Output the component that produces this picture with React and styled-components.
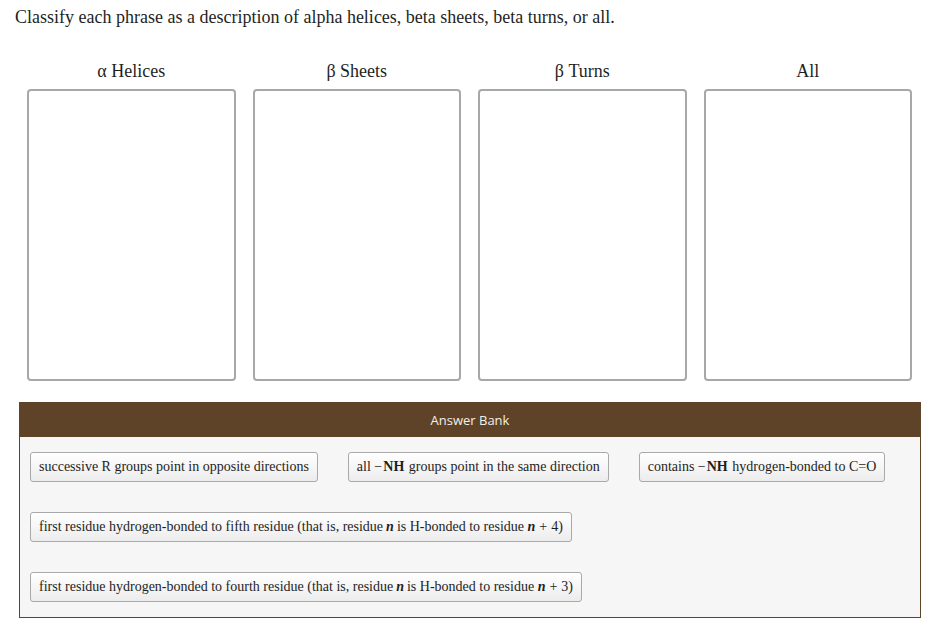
import React from "react";
import styled, { createGlobalStyle } from "styled-components";

const GlobalStyle = createGlobalStyle`
  html, body {
    margin: 0;
    padding: 0;
    background: #fff;
  }
  body {
    font-family: "Liberation Serif", "Times New Roman", serif;
    color: #222;
  }
`;

const columns = [
  { id: "alpha", label: "α Helices" },
  { id: "sheets", label: "β Sheets" },
  { id: "turns", label: "β Turns" },
  { id: "all", label: "All" },
];

const Page = styled.div`
  width: 936px;
  padding: 7px 0 0;
`;

const Prompt = styled.p`
  margin: 0 0 0 15px;
  font-size: 18px;
  line-height: 21px;
  color: #1f1f1f;
`;

const Targets = styled.div`
  display: grid;
  grid-template-columns: repeat(4, 1fr);
  column-gap: 17px;
  width: 885px;
  margin: 33px 0 0 27px;
`;

const Column = styled.div`
  display: flex;
  flex-direction: column;
  align-items: center;
`;

const ColumnTitle = styled.div`
  font-size: 18px;
  line-height: 20px;
  color: #1f1f1f;
  margin-bottom: 8px;
`;

const DropBox = styled.div`
  box-sizing: border-box;
  width: 100%;
  height: 292px;
  border: 2px solid #a8a8a8;
  border-radius: 4px;
  background: #fff;
`;

const Bank = styled.section`
  box-sizing: border-box;
  width: 902px;
  margin: 21px 0 0 19px;
  border: 1px solid #5e4329;
  background: #f6f6f6;
`;

const BankHeader = styled.div`
  height: 34px;
  background: #5e4329;
  color: #f4efe8;
  font-family: "Open Sans", "Noto Sans", sans-serif;
  font-size: 13px;
  display: flex;
  align-items: center;
  justify-content: center;
`;

const Chips = styled.div`
  display: flex;
  flex-wrap: wrap;
  column-gap: 30px;
  row-gap: 30px;
  padding: 15px 10px 15px;
`;

const Chip = styled.div`
  box-sizing: border-box;
  height: 30px;
  padding: 0 8px;
  display: flex;
  align-items: center;
  border: 1px solid #a9a9a9;
  border-radius: 3px;
  background: linear-gradient(#ffffff, #ececec);
  font-size: 14px;
  color: #1e1e1e;
  white-space: nowrap;
`;

const Chem = styled.b`
  font-weight: bold;
  margin: 0 1px;
`;

const Var = styled.i`
  font-weight: bold;
  margin: 0 ${(p) => (p.$tight ? "0" : "3px")};
`;

const Op = styled.span`
  margin: 0 ${(p) => (p.$tight ? "0" : "4px")};
`;

export default function App() {
  return (
    <Page>
      <GlobalStyle />
      <Prompt>
        Classify each phrase as a description of alpha helices, beta sheets,
        beta turns, or all.
      </Prompt>
      <Targets>
        {columns.map((c) => (
          <Column key={c.id}>
            <ColumnTitle>{c.label}</ColumnTitle>
            <DropBox />
          </Column>
        ))}
      </Targets>
      <Bank>
        <BankHeader>Answer Bank</BankHeader>
        <Chips>
          <Chip>successive R groups point in opposite directions</Chip>
          <Chip>
            all&nbsp;<Op $tight>−</Op>
            <Chem>NH</Chem>&nbsp;groups point in the same direction
          </Chip>
          <Chip>
            contains&nbsp;<Op $tight>−</Op>
            <Chem>NH</Chem>&nbsp;hydrogen-bonded to C=O
          </Chip>
          <Chip>
            first residue hydrogen-bonded to fifth residue (that is, residue
            <Var>n</Var>is H-bonded to residue&nbsp;<Var $tight>n</Var>
            <Op>+</Op>4)
          </Chip>
          <Chip>
            first residue hydrogen-bonded to fourth residue (that is, residue
            <Var>n</Var>is H-bonded to residue&nbsp;<Var $tight>n</Var>
            <Op>+</Op>3)
          </Chip>
        </Chips>
      </Bank>
    </Page>
  );
}
